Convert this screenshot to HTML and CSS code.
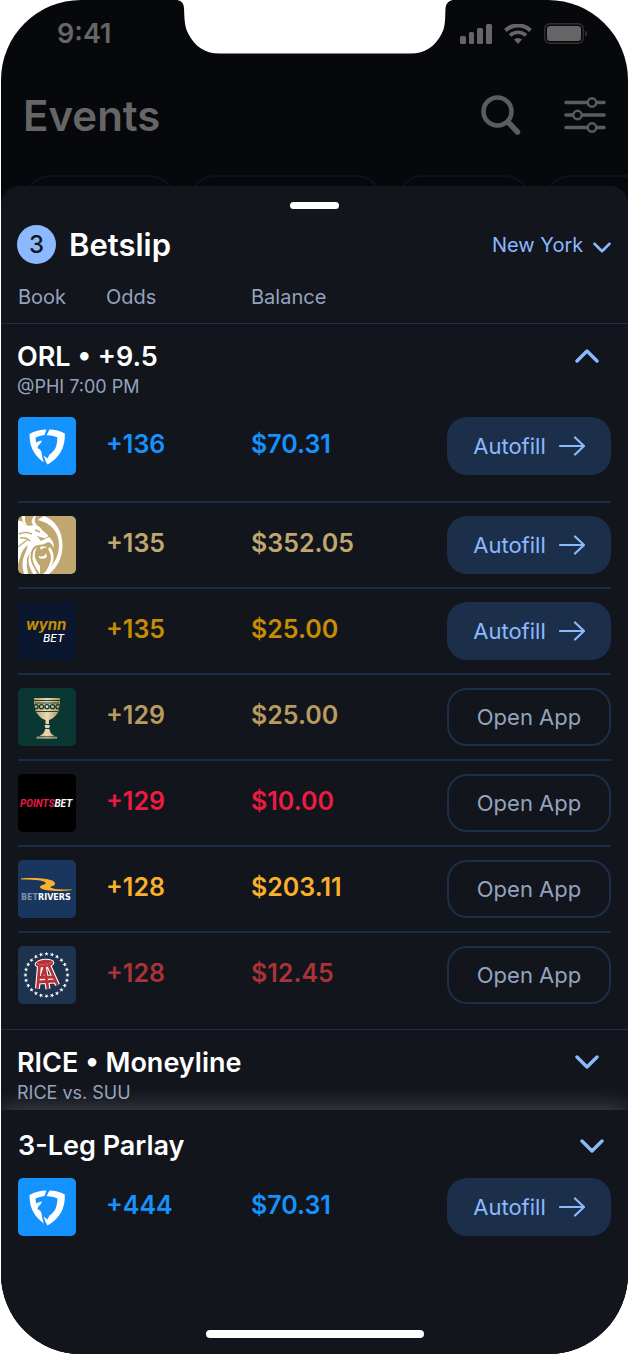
FILE: index.html
```html
<!DOCTYPE html>
<html lang="en">
<head>
  <meta charset="UTF-8">
  <meta name="viewport" content="width=device-width, initial-scale=1">
  <title>Betslip</title>
  <link rel="stylesheet" href="styles.css">
</head>
<body>
  <!-- shared icons -->
  <svg class="defs" aria-hidden="true">
    <symbol id="chevron" viewBox="0 0 24 14">
      <path d="M2 2l10 10L22 2" fill="none" stroke="#8cb8ff" stroke-width="3.4" stroke-linecap="round" stroke-linejoin="round"/>
    </symbol>
    <symbol id="arrow" viewBox="0 0 26 20">
      <path d="M1 10h24M16 1.5l9 8.5-9 8.5" fill="none" stroke="#8cb8ff" stroke-width="2.2" stroke-linecap="round" stroke-linejoin="round"/>
    </symbol>
    <symbol id="fanduel" viewBox="0 0 58 58">
      <rect width="58" height="58" fill="#1493ff"/>
      <path d="M11.5 17Q19 12.8 28.5 12.6L26.4 18Q21.500 18.500 17.500 20.500L18 25.500Q20.500 24 24 23.600L22.500 26.500 20.300 28.500 19.500 31 22 32.500 23.500 35 24 39 25.700 45.500Q15 37.500 12.500 27Q11.500 22 11.500 17Z" fill="#fff"/>
      <path d="M31.500 12.600Q39.500 12.800 46.800 16.500Q47.200 27 43 34.500Q38.500 42.500 29.500 47.500L27.500 44 25.500 38.500 29.500 41.500 31.500 37.500Q37 34 38.500 28Q39.500 24 39.300 20.300Q34 18 28.500 18.200Z" fill="#fff"/>
    </symbol>
  </svg>

  <div class="phone">
    <svg class="notch" viewBox="0 0 285 54" aria-hidden="true">
      <path d="M0 0H5Q11 1 11.500 8C12 20 12 27 16 34C22 46 32 53.500 47 53.500H238C253 53.500 263 46 269 34C273 27 272.500 20 273 8Q274 1 280 0H285Z" fill="#fff"/>
    </svg>

    <header class="backdrop">
      <div class="status">
        <span class="time">9:41</span>
        <div class="status-icons">
          <svg width="32" height="20" viewBox="0 0 32 20" fill="#666">
            <rect y="12" width="6" height="8" rx="1.500"/>
            <rect x="9" y="8" width="5" height="12" rx="1.500"/>
            <rect x="17" y="4" width="6" height="16" rx="1.500"/>
            <rect x="26" width="6" height="20" rx="1.500"/>
          </svg>
          <svg width="28" height="20" viewBox="0 0 28 20">
            <path d="M1.500 6.500a18 18 0 0 1 25 0" fill="none" stroke="#666" stroke-width="4"/>
            <path d="M6 11.500a11.500 11.500 0 0 1 16 0" fill="none" stroke="#666" stroke-width="3.600"/>
            <path d="M10 15.500a6 6 0 0 1 8 0L14 20z" fill="#666"/>
          </svg>
          <svg width="44" height="21" viewBox="0 0 44 21">
            <rect x=".700" y=".700" width="38.600" height="19.600" rx="5.500" fill="none" stroke="#2e2f32" stroke-width="1.400"/>
            <rect x="3" y="3" width="34" height="15" rx="3" fill="#666"/>
            <path d="M41 7.500q2.500 1 2.500 3t-2.500 3z" fill="#2e2f32"/>
          </svg>
        </div>
      </div>
      <div class="topbar">
        <h1>Events</h1>
        <button class="icon-btn" type="button" aria-label="Search">
          <svg width="40" height="40" viewBox="0 0 40 40" fill="none" stroke="#5b5c60" stroke-linecap="round">
            <circle cx="16.500" cy="16.500" r="14" stroke-width="4.600"/>
            <path d="M27 27l9.500 10" stroke-width="5.500"/>
          </svg>
        </button>
        <button class="icon-btn" type="button" aria-label="Filters">
          <svg width="42" height="36" viewBox="0 0 42 36" stroke="#5b5c60" stroke-width="3.600" stroke-linecap="round">
            <path d="M2 5.500h38M2 18h38M2 30.500h38"/>
            <g fill="#06080b" stroke-width="2.400">
              <circle cx="28" cy="5.500" r="4.200"/>
              <circle cx="13.500" cy="18" r="4.200"/>
              <circle cx="28" cy="30.500" r="4.200"/>
            </g>
          </svg>
        </button>
      </div>
      <div class="pills">
        <span class="pill"></span>
        <span class="pill pill-wide"></span>
        <span class="pill pill-short"></span>
        <span class="pill"></span>
      </div>
    </header>

    <main class="sheet">
      <div class="handle"></div>
      <div class="sheet-title">
        <span class="count">3</span>
        <h2>Betslip</h2>
        <label class="state">
          <select aria-label="State"><option>New York</option></select>
          <svg class="chevron-small" width="18" height="11"><use href="#chevron"/></svg>
        </label>
      </div>

      <table class="books">
        <thead>
          <tr class="columns">
            <th>Book</th>
            <th>Odds</th>
            <th>Balance</th>
          </tr>
        </thead>
        <tbody>
          <tr class="bet">
            <th colspan="4">
              <div>
                <h3>ORL • +9.5</h3>
                <p>@PHI 7:00 PM</p>
              </div>
              <button class="toggle" type="button" aria-label="Collapse"><svg class="up" width="24" height="14"><use href="#chevron"/></svg></button>
            </th>
          </tr>
          <tr class="book fanduel best">
            <td><svg class="logo"><use href="#fanduel"/></svg></td>
            <td class="amount">+136</td>
            <td class="amount">$70.31</td>
            <td><button class="btn btn-fill" type="button">Autofill <svg width="26" height="20"><use href="#arrow"/></svg></button></td>
          </tr>
          <tr class="book mgm">
            <td>
              <svg class="logo" viewBox="0 0 58 58">
                <rect width="58" height="58" fill="#bfa76f"/>
                <g fill="#fff">
                  <path d="M26 0C37 4 44.500 15 44.500 29C44.500 42 39 52 31 58H25C34 51 41 42 41 29C41 16 33 7 20 4C22 2 24 1 26 0Z"/>
                  <path d="M0 5Q4 4 6 8Q10 11 16 9Q21 9 24 14L30 19Q30 22 26 22L19 20 23 25Q27 23 31 21Q36 25 36 32Q33 26 30 26Q26 29 20 29Q15 30 14 34L9 42Q8 50 10 58H6Q3 48 6 40Q9 33 10 29Q4 33 2 42L0 48Z"/>
                  <path d="M4 0H7Q6 5 9 9L6 8Q4 5 4 0ZM16 0H18Q15 6 19 9L15 9Q12 5 16 0Z"/>
                  <path d="M14 33Q11 41 14 48Q17 53 19 58H15Q9 48 11 40ZM19 31Q15 39 18 44Q20 48 22 50L22 58L18 52Q12 42 16 34Z"/>
                  <path d="M32 31Q37 37 35 46Q33 52 27 57Q32 49 33 43Q33 37 30 33Z"/>
                  <path d="M21 40Q26 42 28 37L29 41Q25 44 21 42ZM22 31Q27 29 29 32Q25 31 23 34Z"/>
                </g>
                <g fill="none" stroke="#bfa76f">
                  <path d="M1 18Q8 15 14 18M17 14l5 2M2 22Q8 21 12 25" stroke-width="1.500"/>
                  <path d="M0 31Q5 27 9 24" stroke-width="1.200"/>
                </g>
              </svg>
            </td>
            <td class="amount">+135</td>
            <td class="amount">$352.05</td>
            <td><button class="btn btn-fill" type="button">Autofill <svg width="26" height="20"><use href="#arrow"/></svg></button></td>
          </tr>
          <tr class="book wynn">
            <td>
              <svg class="logo" viewBox="0 0 58 58">
                <rect width="58" height="58" fill="#0a172f"/>
                <text class="wynn-name" x="8" y="28">wynn</text>
                <text class="wynn-bet" x="25" y="40">BET</text>
              </svg>
            </td>
            <td class="amount">+135</td>
            <td class="amount">$25.00</td>
            <td><button class="btn btn-fill" type="button">Autofill <svg width="26" height="20"><use href="#arrow"/></svg></button></td>
          </tr>
          <tr class="book caesars">
            <td>
              <svg class="logo" viewBox="0 0 58 58">
                <defs>
                  <linearGradient id="gold">
                    <stop offset="0" stop-color="#b99a5f"/>
                    <stop offset=".5" stop-color="#ead9b4"/>
                    <stop offset="1" stop-color="#b08e52"/>
                  </linearGradient>
                </defs>
                <rect width="58" height="58" fill="#0b3733"/>
                <path d="M16 10H42V15Q42 22 39 26Q35 31 31 32V36L32 38 31 40 32 43Q33 47 39 49V50.500H18.500V49Q25 47 26.500 43L27.500 40 26.500 38 27.500 36V32Q23 31 19.500 26Q16 22 16 15Z" fill="url(#gold)"/>
                <path d="M16 12.500h26M17 15h24M18 23.500h22M26 36.500h6M26 40.500h6M20 48.800h18" stroke="#0b3733" stroke-width=".9"/>
                <g fill="none" stroke="#0b3733" stroke-width="1.300">
                  <circle cx="18" cy="18.700" r="2.100"/>
                  <circle cx="23.500" cy="18.700" r="2.100"/>
                  <circle cx="29" cy="18.700" r="2.100"/>
                  <circle cx="34.500" cy="18.700" r="2.100"/>
                  <circle cx="40" cy="18.700" r="2.100"/>
                </g>
              </svg>
            </td>
            <td class="amount">+129</td>
            <td class="amount">$25.00</td>
            <td><button class="btn" type="button">Open App</button></td>
          </tr>
          <tr class="book points">
            <td>
              <svg class="logo" viewBox="0 0 58 58">
                <rect width="58" height="58" fill="#000"/>
                <text class="points-name" x="2" y="33">POINTS<tspan fill="#fff">BET</tspan></text>
              </svg>
            </td>
            <td class="amount">+129</td>
            <td class="amount">$10.00</td>
            <td><button class="btn" type="button">Open App</button></td>
          </tr>
          <tr class="book rivers">
            <td>
              <svg class="logo" viewBox="0 0 58 58">
                <rect width="58" height="58" fill="#19365f"/>
                <path d="M3 18.500C15 17.500 38 18 37 24C36.500 26.500 31.500 26 32.500 27.500C36 29.800 48 29.500 54.500 29.500C54 31.500 24 32 22 27.500C21.500 24.500 29 25 27.500 22.500C24 19.500 12 19.500 3 19.500Z" fill="#f9b02a"/>
                <text class="rivers-name" x="3" y="40">BET<tspan fill="#fff">RIVERS</tspan></text>
              </svg>
            </td>
            <td class="amount">+128</td>
            <td class="amount">$203.11</td>
            <td><button class="btn" type="button">Open App</button></td>
          </tr>
          <tr class="book barstool">
            <td>
              <svg class="logo" viewBox="0 0 58 58">
                <defs>
                  <path id="star" d="M28.500 5.700l.6 1.500h1.600l-1.300 1 .5 1.600-1.400-1-1.400 1 .5-1.600-1.300-1h1.600z"/>
                  <g id="stars">
                    <use href="#star"/>
                    <use href="#star" transform="rotate(15 28.500 29)"/>
                    <use href="#star" transform="rotate(30 28.500 29)"/>
                    <use href="#star" transform="rotate(45 28.500 29)"/>
                    <use href="#star" transform="rotate(60 28.500 29)"/>
                    <use href="#star" transform="rotate(75 28.500 29)"/>
                  </g>
                  <g id="stool">
                    <path d="M21.500 20L19.500 42.500M26.500 21L30 43M31 20L39.500 39M27 21L24 30"/>
                    <path d="M20.500 31.500L36 31M20 36L37.500 35"/>
                  </g>
                </defs>
                <rect width="58" height="58" fill="#1d334e"/>
                <g fill="#fff">
                  <use href="#stars"/>
                  <use href="#stars" transform="rotate(90 28.500 29)"/>
                  <use href="#stars" transform="rotate(180 28.500 29)"/>
                  <use href="#stars" transform="rotate(270 28.500 29)"/>
                </g>
                <use href="#stool" stroke="#fff" stroke-width="5"/>
                <ellipse cx="26.500" cy="17.500" rx="10" ry="4.700" transform="rotate(-6 26.500 17.500)" fill="#fff"/>
                <use href="#stool" stroke="#b93036" stroke-width="2.800"/>
                <ellipse cx="26.500" cy="17.500" rx="9" ry="3.700" transform="rotate(-6 26.500 17.500)" fill="#b93036"/>
                <path d="M18.500 17.500Q26 20.500 34.500 16" fill="none" stroke="#d98a8c" stroke-width=".6"/>
              </svg>
            </td>
            <td class="amount">+128</td>
            <td class="amount">$12.45</td>
            <td><button class="btn" type="button">Open App</button></td>
          </tr>
        </tbody>
        <tbody>
          <tr class="bet bet-closed">
            <th colspan="4">
              <div>
                <h3>RICE • Moneyline</h3>
                <p>RICE vs. SUU</p>
              </div>
              <button class="toggle" type="button" aria-label="Expand"><svg width="24" height="14"><use href="#chevron"/></svg></button>
            </th>
          </tr>
        </tbody>
      </table>

      <section class="parlay">
        <div class="parlay-title">
          <h3>3-Leg Parlay</h3>
          <button class="toggle" type="button" aria-label="Expand"><svg width="24" height="14"><use href="#chevron"/></svg></button>
        </div>
        <div class="book fanduel">
          <svg class="logo"><use href="#fanduel"/></svg>
          <span class="amount">+444</span>
          <span class="amount">$70.31</span>
          <button class="btn btn-fill" type="button">Autofill <svg width="26" height="20"><use href="#arrow"/></svg></button>
        </div>
        <div class="home-bar"></div>
      </section>
    </main>
  </div>
</body>
</html>
```

FILE: styles.css
```css
* {
  box-sizing: border-box;
}
body {
  margin: 0;
  background: #fff;
  font-family: Inter, "Liberation Sans", sans-serif;
  color: #fff;
}
h1, h2, h3, p {
  margin: 0;
}
button, select {
  font-family: inherit;
  padding: 0;
  border: none;
  background: none;
}
svg {
  display: block;
}
.defs {
  position: absolute;
  width: 0;
  height: 0;
}

.phone {
  position: relative;
  display: flex;
  flex-direction: column;
  min-height: 100vh;
  margin: 0 1px;
  border-radius: 80px;
  overflow: hidden;
  background: #06080b;
}
.notch {
  position: absolute;
  top: 0;
  left: 50%;
  width: 285px;
  height: 54px;
  transform: translateX(-50%);
}

/* dimmed events page behind the sheet */
.status {
  display: flex;
  justify-content: space-between;
  align-items: center;
  height: 67px;
  padding: 0 40px 0 56px;
}
.time {
  font-size: 27px;
  font-weight: 600;
  color: #666;
}
.status-icons {
  display: flex;
  align-items: center;
  gap: 12px;
}
.topbar {
  display: flex;
  align-items: center;
  height: 96px;
  padding: 0 22px;
  gap: 43px;
}
.topbar h1 {
  flex: 1;
  font-size: 42px;
  font-weight: 600;
  color: #666;
}
.pills {
  display: flex;
  gap: 17px;
  height: 23px;
  padding: 12px 0 0 25px;
  overflow: hidden;
}
.pill {
  flex: none;
  width: 148px;
  height: 48px;
  border: 2px solid #0b1321;
  border-radius: 24px;
}
.pill-wide {
  width: 190px;
}
.pill-short {
  width: 131px;
}

.sheet {
  flex: 1;
  display: flex;
  flex-direction: column;
  border-radius: 18px 18px 0 0;
  background: #12151c;
}
.handle {
  width: 49px;
  height: 7px;
  margin: 16px auto;
  border-radius: 4px;
  background: #fff;
}
.sheet-title {
  display: flex;
  align-items: center;
  height: 39px;
  padding: 0 17px 0 16px;
}
.count {
  width: 39px;
  border-radius: 50%;
  background: #8cb8ff;
  color: #12151c;
  font-size: 24px;
  font-weight: 500;
  line-height: 39px;
  text-align: center;
}
.sheet-title h2 {
  flex: 1;
  margin-left: 13px;
  font-size: 31px;
  font-weight: 600;
}
.state {
  display: flex;
  align-items: center;
  gap: 9px;
}
.state select {
  appearance: none;
  color: #8cb8ff;
  font-size: 20px;
}
.chevron-small {
  margin-top: 5px;
}

.books, .books thead, .books tbody {
  display: block;
}
.books th {
  padding: 0;
  font-weight: 400;
  text-align: left;
}
.books td {
  padding: 0;
}
.columns, .book {
  display: grid;
  grid-template-columns: 88px 145px 1fr 164px;
  margin: 0 17px;
}
.books thead {
  border-bottom: 1px solid #1c2e48;
}
.columns {
  padding: 19px 0 12px;
  color: #94a3bd;
  font-size: 20px;
  line-height: 28px;
}
.bet {
  display: block;
}
.books .bet th {
  display: flex;
  justify-content: space-between;
  align-items: flex-start;
  padding: 15px 29px 5px 16px;
}
.bet h3, .parlay h3 {
  font-size: 27px;
  font-weight: 600;
  line-height: 36px;
}
.bet p {
  color: #94a3bd;
  font-size: 18px;
  line-height: 24px;
}
.bet-closed {
  border-top: 1px solid #1c2e48;
}
.toggle {
  padding: 10px 0;
}
.up {
  transform: rotate(180deg);
}

.book {
  align-items: center;
}
.books .book {
  padding: 13px 0;
  border-bottom: 2px solid #1b2b45;
}
.books .best {
  padding-bottom: 26px;
}
.books .book:last-child {
  padding-bottom: 25px;
  border-bottom: none;
}
.logo {
  width: 58px;
  height: 58px;
  border-radius: 5px;
}
.book .amount {
  padding-bottom: 5px;
  font-size: 25px;
  font-weight: 600;
}
.fanduel { color: #1493ff; }
.mgm { color: #bfa76f; }
.wynn { color: #c48d02; }
.caesars { color: #b99a5f; }
.points { color: #ed1b42; }
.rivers { color: #f9b02a; }
.barstool { color: #aa3338; }

.btn {
  display: flex;
  justify-content: center;
  align-items: center;
  gap: 13px;
  width: 164px;
  height: 58px;
  border: 2px solid #1c2e48;
  border-radius: 20px;
  color: #94a3bd;
  font-size: 22px;
}
.btn-fill {
  border: none;
  background: #1c2f4a;
  color: #8cb8ff;
}

.parlay {
  flex: 1;
  display: flex;
  flex-direction: column;
  background: #12151c;
  box-shadow: 0 0 24px rgba(255, 255, 255, 0.25);
}
.parlay-title {
  display: flex;
  justify-content: space-between;
  padding: 18px 24px 14px 17px;
}
.home-bar {
  width: 218px;
  height: 8px;
  margin: auto auto 16px;
  border-radius: 4px;
  background: #fff;
}

/* lettering inside the book logos */
.wynn-name {
  fill: #c48d02;
  font: italic 700 15px Inter, sans-serif;
}
.wynn-bet {
  fill: #fff;
  font: italic 500 11px Inter, sans-serif;
}
.points-name {
  fill: #ed1b42;
  font: italic 700 10px Roboto, sans-serif;
}
.rivers-name {
  fill: #7e8da6;
  font: 700 8px "DejaVu Sans", sans-serif;
}
```
